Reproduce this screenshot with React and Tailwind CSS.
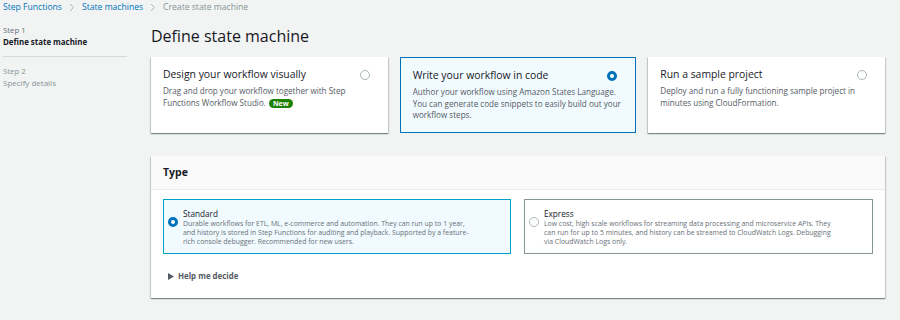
import React from "react";

const font = { fontFamily: '"Open Sans", "Noto Sans", Arial, sans-serif' };

function Radio({ checked }) {
  return checked ? (
    <span className="inline-block w-[10px] h-[10px] rounded-full border-[3px] border-[#0073bb] bg-white shrink-0" />
  ) : (
    <span className="inline-block w-[10px] h-[10px] rounded-full border border-[#aab7b8] bg-white shrink-0" />
  );
}

function Card({ title, children, checked }) {
  return (
    <div
      className={
        "h-[76px] px-[12px] pt-[5px] " +
        (checked
          ? "border border-[#0073bb] bg-[#f1faff]"
          : "bg-white shadow-[0_1px_1px_0_rgba(0,28,36,0.3),1px_1px_1px_0_rgba(0,28,36,0.15),-1px_1px_1px_0_rgba(0,28,36,0.15)]")
      }
    >
      <div className="flex items-center justify-between">
        <div className="text-[10.4px] leading-[16px] text-[#16191f]">{title}</div>
        <div className="mr-[6px]">
          <Radio checked={checked} />
        </div>
      </div>
      <div className="-mt-[1px] text-[8.1px] leading-[11.5px] text-[#545b64]">{children}</div>
    </div>
  );
}

export default function App() {
  return (
    <div className="w-[900px] h-[320px] bg-[#f2f3f3] overflow-hidden" style={font}>
      <div className="flex items-center h-[15px] pl-[3px] text-[8.6px] text-[#0073bb]">
        <span>Step Functions</span>
        <svg width="6" height="9" viewBox="0 0 6 9" className="mx-[7px]">
          <path d="M1 1l3.5 3.5L1 8" fill="none" stroke="#aab7b8" strokeWidth="1" />
        </svg>
        <span>State machines</span>
        <svg width="6" height="9" viewBox="0 0 6 9" className="mx-[7px]">
          <path d="M1 1l3.5 3.5L1 8" fill="none" stroke="#aab7b8" strokeWidth="1" />
        </svg>
        <span className="text-[#879596]">Create state machine</span>
      </div>
      <div className="flex">
        <div className="w-[124px] ml-[3px] shrink-0 pt-[10px]">
          <div className="text-[7.8px] leading-[11px] text-[#687078]">Step 1</div>
          <div className="text-[7.9px] leading-[12px] font-bold text-[#16191f]">Define state machine</div>
          <div className="mt-[8px] border-t border-[#d5dbdb]" />
          <div className="mt-[9px] text-[7.8px] leading-[11px] text-[#879596]">Step 2</div>
          <div className="text-[8px] leading-[12px] text-[#879596]">Specify details</div>
        </div>
        <div className="ml-[24px] w-[734px]">
          <h1 className="text-[16px] leading-[22px] mt-[10px] text-[#16191f]">Define state machine</h1>
          <div className="grid grid-cols-3 gap-[12px] mt-[10px]">
            <Card title="Design your workflow visually">
              Drag and drop your workflow together with Step Functions Workflow Studio.
              <span className="inline-block ml-[3px] bg-[#1d8102] text-white font-bold rounded-full px-[4px] text-[7px] leading-[9px] align-middle">
                New
              </span>
            </Card>
            <Card title="Write your workflow in code" checked>
              Author your workflow using Amazon States Language. You can generate code snippets to easily build out
              your workflow steps.
            </Card>
            <Card title="Run a sample project">
              Deploy and run a fully functioning sample project in minutes using CloudFormation.
            </Card>
          </div>
          <div className="mt-[23px] bg-white shadow-[0_1px_1px_0_rgba(0,28,36,0.3),1px_1px_1px_0_rgba(0,28,36,0.15),-1px_1px_1px_0_rgba(0,28,36,0.15)]">
            <div className="h-[34px] bg-[#fafafa] border-b border-[#eaeded] flex items-center pl-[12px]">
              <span className="text-[10.5px] font-bold text-[#16191f]">Type</span>
            </div>
            <div className="px-[12px] pt-[9px] pb-[15px]">
              <div className="flex gap-[13px]">
                <div className="w-[348px] h-[55px] border border-[#00a1c9] bg-[#f1faff] flex pl-[4px] pt-[8px]">
                  <div className="pt-[1px]">
                    <Radio checked />
                  </div>
                  <div className="ml-[5px] text-[6.9px] leading-[9px] text-[#687078]">
                    <div className="text-[8.2px] leading-[11px] text-[#16191f]">Standard</div>
                    Durable workflows for ETL, ML, e-commerce and automation. They can run up to 1 year,
                    <br />
                    and history is stored in Step Functions for auditing and playback. Supported by a feature-
                    <br />
                    rich console debugger. Recommended for new users.
                  </div>
                </div>
                <div className="w-[349px] h-[55px] border border-[#879596] flex pl-[4px] pt-[8px]">
                  <div className="pt-[1px]">
                    <Radio />
                  </div>
                  <div className="ml-[5px] text-[6.9px] leading-[9px] text-[#687078]">
                    <div className="text-[8.2px] leading-[11px] text-[#16191f]">Express</div>
                    Low cost, high scale workflows for streaming data processing and microservice APIs. They
                    <br />
                    can run for up to 5 minutes, and history can be streamed to CloudWatch Logs. Debugging
                    <br />
                    via CloudWatch Logs only.
                  </div>
                </div>
              </div>
              <div className="flex items-center mt-[17px] pl-[5px]">
                <svg width="6" height="7" viewBox="0 0 6 7">
                  <path d="M0 0L6 3.5L0 7Z" fill="#545b64" />
                </svg>
                <span className="ml-[4px] text-[7.9px] font-bold text-[#545b64]">Help me decide</span>
              </div>
            </div>
          </div>
        </div>
      </div>
    </div>
  );
}
